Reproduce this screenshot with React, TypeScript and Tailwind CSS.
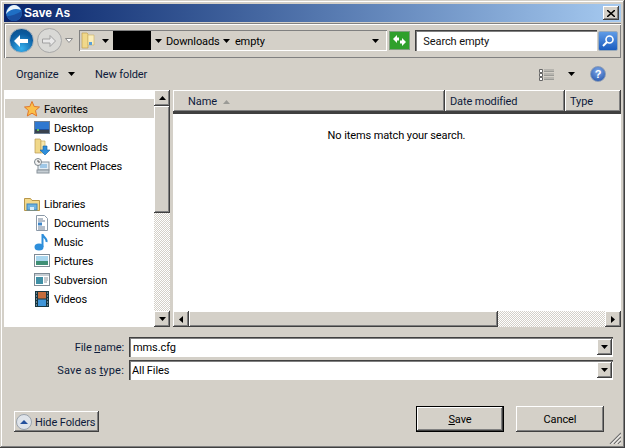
import React from "react";

const raised = "shadow-[inset_-1px_-1px_#404040,inset_1px_1px_#ffffff,inset_-2px_-2px_#808080]";
const hatch = "bg-[repeating-conic-gradient(#ffffff_0_25%,#d4d0c8_0_50%)] bg-[length:2px_2px]";

const Caret = ({ cls = "" }: { cls?: string }) => (
  <svg width="7" height="4" viewBox="0 0 7 4" className={`shrink-0 ${cls}`}><path d="M0 0h7L3.5 4z" fill="#000" /></svg>
);

const Tri = ({ dir }: { dir: "up" | "down" | "left" | "right" }) => {
  const d = { up: "M0 4h7L3.5 0z", down: "M0 0h7L3.5 4z", left: "M4 0v7L0 3.5z", right: "M0 0v7L4 3.5z" }[dir];
  const s = dir === "up" || dir === "down" ? [7, 4] : [4, 7];
  return <svg width={s[0]} height={s[1]} viewBox={`0 0 ${s[0]} ${s[1]}`}><path d={d} fill="#000" /></svg>;
};

const ScrollBtn = ({ dir, cls }: { dir: "up" | "down" | "left" | "right"; cls: string }) => (
  <div className={`bg-[#d4d0c8] flex items-center justify-center shrink-0 ${raised} ${cls}`}><Tri dir={dir} /></div>
);

const Star = () => (
  <svg width="16" height="16" viewBox="0 0 16 16"><path d="M8 .5l2.2 5 5.3.5-4 3.6 1.2 5.400L8 12.200 3.300 15l1.200-5.400-4-3.600 5.300-.5z" fill="#fbc04a" stroke="#e0762a" strokeWidth="1" /></svg>
);
const Desktop = () => (
  <svg width="16" height="16" viewBox="0 0 16 16"><rect x="0.5" y="1.5" width="15" height="12" fill="#1d4f9c" stroke="#6d7f95" /><rect x="1" y="2" width="14" height="7" fill="#2f78d0" /><rect x="1" y="10" width="14" height="3" fill="#39424e" /><rect x="3" y="9" width="2" height="2" fill="#5fc05a" /></svg>
);
const DownloadsIc = () => (
  <svg width="16" height="18" viewBox="0 0 16 18"><path d="M1 1h5l1 1v13H1z" fill="#f0d88a" stroke="#b89a50" strokeWidth=".7" /><path d="M7 3h4v12H7z" fill="#f7e7ad" stroke="#c8ac60" strokeWidth=".7" /><path d="M9 8h4v4h3l-5 5-5-5h3z" fill="#2f8fdc" stroke="#14609f" strokeWidth=".6" /></svg>
);
const Recent = () => (
  <svg width="16" height="16" viewBox="0 0 16 16"><rect x="4" y="4" width="11" height="8" fill="#e3edf4" stroke="#8a949c" /><rect x="6" y="6" width="7" height="4" fill="#9fc7e6" /><circle cx="4" cy="4" r="3.5" fill="#f2f2f2" stroke="#7b858c" /><path d="M4 2v2h2" stroke="#555" fill="none" /><rect x="3" y="12" width="12" height="3" fill="#c6ced4" stroke="#8a949c" /></svg>
);
const Libs = () => (
  <svg width="16" height="16" viewBox="0 0 16 16"><path d="M.5 2.5h6l1.500 2h7.500v10H.5z" fill="#f3d98c" stroke="#b8974a" /><rect x="3" y="8" width="10" height="6" fill="#6fb3e0" stroke="#3f85bd" /><rect x="6" y="11" width="4" height="3" fill="#d8eefb" /></svg>
);
const Doc = () => (
  <svg width="16" height="16" viewBox="0 0 16 16"><path d="M2.5.5h8l3 3v12h-11z" fill="#fff" stroke="#8b99a8" /><path d="M4 4h5M4 6h7M4 12h7M4 14h7" stroke="#6d7f95" /><rect x="4" y="7.5" width="4" height="3" fill="#3f86c7" /></svg>
);
const Music = () => (
  <svg width="16" height="18" viewBox="0 0 16 18"><ellipse cx="5" cy="14" rx="4.500" ry="3.500" fill="#2e8fdb" /><path d="M8.500 14V1c0 3 5 4 4 8" stroke="#2e8fdb" strokeWidth="2" fill="none" /></svg>
);
const Pict = () => (
  <svg width="16" height="13" viewBox="0 0 16 13"><rect x=".5" y=".5" width="15" height="12" fill="#fff" stroke="#7f8b95" /><rect x="2" y="2" width="12" height="5" fill="#a9d6ee" /><rect x="2" y="7" width="12" height="4" fill="#3f8f75" /></svg>
);
const Subv = () => (
  <svg width="16" height="13" viewBox="0 0 16 13"><rect x=".5" y=".5" width="15" height="12" fill="#fff" stroke="#7f8b95" /><rect x="1" y="1" width="14" height="2" fill="#c6ced4" /><rect x="2" y="4" width="7" height="7" fill="#3f8fa5" /><path d="M10 5h4M10 7h4M10 9h3" stroke="#8a949c" /></svg>
);
const Video = () => (
  <svg width="14" height="16" viewBox="0 0 14 16" className="ml-[1px]"><rect width="14" height="16" fill="#17353f" /><rect x="3" y="1" width="8" height="6.500" fill="#c46c3c" /><rect x="3" y="8.500" width="8" height="6.500" fill="#3f95d8" /><path d="M1 2h1M1 5h1M1 8h1M1 11h1M1 14h1M12 2h1M12 5h1M12 8h1M12 11h1M12 14h1" stroke="#bcd" /></svg>
);

const NavRow = ({ top, icon, label, highlight }: { top?: boolean; icon: React.ReactNode; label: string; highlight?: boolean }) => (
  <div className={`h-[19px] flex items-center shrink-0 ${highlight ? "bg-[#d4d0c8]" : ""} ${top ? "pl-[19px]" : "pl-[29px]"}`}>
    <span className="w-[20px] h-[19px] flex items-center shrink-0">{icon}</span>
    <span className="text-[#000] leading-none pt-[1px]">{label}</span>
  </div>
);

export default function App() {
  return (
    <div className="w-[625px] h-[448px] overflow-hidden bg-[#d4d0c8] flex flex-col p-[4px] text-[11px] tracking-[-0.1px] text-black shadow-[inset_-1px_-1px_#404040,inset_1px_1px_#d4d0c8,inset_-2px_-2px_#808080,inset_2px_2px_#ffffff] font-['Roboto','Noto_Sans',sans-serif]">
      {/* Title bar */}
      <div className="h-[18px] shrink-0 flex items-center bg-gradient-to-r from-[#0a246a] to-[#a6caf0]">
        <svg width="16" height="16" viewBox="0 0 16 16" className="ml-[2px]">
          <circle cx="8" cy="8" r="8" fill="#1f6fc4" />
          <path d="M0 9c4-5 10-6 15-4-1-3-4-5-7-5C4 0 1 4 0 9z" fill="#eaf4fb" />
          <path d="M1 11c4 0 10-2 15-5v2c-1 5-4 8-8 8-3 0-6-2-7-5z" fill="#1a4fa0" />
        </svg>
        <span className="ml-[2px] text-white font-bold text-[12px] tracking-normal leading-none font-['Liberation_Sans',sans-serif]">Save As</span>
        <div className={`ml-auto mr-[2px] w-[16px] h-[14px] bg-[#d4d0c8] flex items-center justify-center ${raised}`}>
          <svg width="8" height="7" viewBox="0 0 8 7"><path d="M0 0l8 7M8 0L0 7" stroke="#000" strokeWidth="1.500" /></svg>
        </div>
      </div>

      {/* Nav band */}
      <div className="h-[35px] mt-[1px] shrink-0 flex items-center pl-[5px] pr-[3px] shadow-[inset_0_1px_#808080,inset_1px_0_#808080,inset_0_2px_#ffffff,inset_2px_0_#ffffff,inset_0_-1px_#808080,inset_-1px_0_#808080]">
        <div className="w-[25px] h-[25px] rounded-full bg-[radial-gradient(circle_at_50%_85%,#35b0ee,#0a5a9e_65%,#0d4f88)] border border-[#a9b2bb] flex items-center justify-center">
          <svg width="14" height="12" viewBox="0 0 14 12"><path d="M6 0L0 6l6 6V8h8V4H6z" fill="#fff" /></svg>
        </div>
        <div className="ml-[3px] w-[25px] h-[25px] rounded-full bg-[#d9d9d6] border border-[#a8a8a8] flex items-center justify-center">
          <svg width="14" height="12" viewBox="0 0 14 12"><path d="M8 .5L13.500 6 8 11.500V8H.5V4H8z" fill="#e8e8e8" stroke="#a0a0a0" /></svg>
        </div>
        <svg width="8" height="5" viewBox="0 0 8 5" className="ml-[3px]"><path d="M.5.5h7L4 4.500z" fill="#fff" stroke="#8a8a8a" /></svg>
        <div className="ml-[6px] w-[309px] h-[21px] flex items-center shadow-[inset_1px_1px_#808080,inset_-1px_-1px_#ffffff]">
          <svg width="14" height="17" viewBox="0 0 14 17" className="ml-[2px]"><path d="M1 1h5l1 1v14H1z" fill="#f0d88a" stroke="#c0a050" strokeWidth=".7" /><path d="M7 3h6v10H7z" fill="#fbeebb" stroke="#d0b870" strokeWidth=".7" /><rect x="8" y="10" width="3" height="3" fill="#5aa0d8" /></svg>
          <Caret cls="ml-[7px]" />
          <div className="ml-[4px] w-[38px] h-[19px] bg-black shrink-0" />
          <Caret cls="ml-[4px]" />
          <span className="ml-[4px] leading-none w-[53px] pt-[1px]">Downloads</span>
          <Caret cls="ml-[4px]" />
          <span className="ml-[5px] leading-none pt-[1px]">empty</span>
          <Caret cls="ml-auto mr-[8px]" />
        </div>
        <div className="ml-[2px] w-[21px] h-[19px] bg-[#2fa02c] border border-[#7f9f7f] flex items-center justify-center">
          <svg width="15" height="13" viewBox="0 0 15 13"><path d="M1 5l4-4v2.500h2v3H5V9zM14 8l-4 4V9.500H8v-3h2V4z" fill="#fff" /></svg>
        </div>
        <div className="ml-[5px] w-[182px] h-[21px] bg-white flex items-center pl-[8px] pt-[1px] shadow-[inset_1px_1px_#404040,inset_2px_2px_#808080,inset_-1px_-1px_#ffffff]">
          <span className="leading-none text-[#111]">Search empty</span>
        </div>
        <div className="ml-[1px] w-[20px] h-[20px] rounded-[2px] bg-gradient-to-b from-[#5f9be6] to-[#1a5cc0] border border-[#9ab] flex items-center justify-center">
          <svg width="14" height="14" viewBox="0 0 14 14"><circle cx="8.500" cy="5.500" r="3.500" fill="none" stroke="#fff" strokeWidth="1.600" /><path d="M6 8l-4 4" stroke="#fff" strokeWidth="2" /></svg>
        </div>
      </div>

      {/* Toolbar */}
      <div className="h-[32px] shrink-0 flex items-center pl-[12px] pr-[15px]">
        <span className="leading-none text-[#0d1a3a] w-[45px]">Organize</span>
        <Caret cls="ml-[7px]" />
        <span className="ml-[20px] leading-none text-[#0d1a3a]">New folder</span>
        <svg width="17" height="13" viewBox="0 0 17 13" className="ml-auto"><path d="M1.500 1.500h3v3h-3zM1.500 5.500h3v3h-3zM1.500 9.500h3v3h-3z" fill="#fff" stroke="#666" /><path d="M6 2h10M6 3.500h10M6 6h10M6 7.500h10M6 10h10M6 11.500h10" stroke="#9a9a96" /></svg>
        <Caret cls="ml-[13px]" />
        <div className="ml-[15px] w-[16px] h-[16px] rounded-full bg-[radial-gradient(circle_at_50%_30%,#7fa9e8,#1f4fa8)] border border-[#8a9bb5] flex items-center justify-center text-white font-bold text-[11px] leading-none font-['Liberation_Sans',sans-serif]">?</div>
      </div>

      {/* Main */}
      <div className="h-[237px] shrink-0 flex">
        <div className="w-[150px] shrink-0 bg-white flex flex-col pt-[9px] pl-[1px]">
          <NavRow top highlight icon={<Star />} label="Favorites" />
          <NavRow icon={<Desktop />} label="Desktop" />
          <NavRow icon={<DownloadsIc />} label="Downloads" />
          <NavRow icon={<Recent />} label="Recent Places" />
          <div className="h-[19px] shrink-0" />
          <NavRow top icon={<Libs />} label="Libraries" />
          <NavRow icon={<Doc />} label="Documents" />
          <NavRow icon={<Music />} label="Music" />
          <NavRow icon={<Pict />} label="Pictures" />
          <NavRow icon={<Subv />} label="Subversion" />
          <NavRow icon={<Video />} label="Videos" />
        </div>
        <div className="w-[16px] shrink-0 flex flex-col">
          <ScrollBtn dir="up" cls="h-[16px]" />
          <div className={`h-[107px] shrink-0 bg-[#d4d0c8] ${raised}`} />
          <div className={`flex-1 ${hatch}`} />
          <ScrollBtn dir="down" cls="h-[16px]" />
        </div>
        <div className="w-[3px] shrink-0" />
        <div className="flex-1 min-w-0 flex flex-col bg-white">
          <div className="h-[24px] shrink-0 flex bg-[#d4d0c8] border-b-2 border-[#404040]">
            <div className={`w-[272px] h-[22px] flex items-center pl-[15px] pt-[1px] text-[#0d1a3a] ${raised}`}>
              <span className="leading-none">Name</span>
              <svg width="7" height="4" viewBox="0 0 7 4" className="ml-[6px]"><path d="M0 4h7L3.500 0z" fill="#9a9a96" /></svg>
            </div>
            <div className={`w-[120px] h-[22px] flex items-center pl-[5px] pt-[1px] text-[#0d1a3a] ${raised}`}><span className="leading-none">Date modified</span></div>
            <div className={`flex-1 h-[22px] flex items-center pl-[5px] pt-[1px] text-[#0d1a3a] ${raised}`}><span className="leading-none">Type</span></div>
          </div>
          <div className="flex-1 flex justify-center pt-[16px] pr-[1px]">
            <span className="leading-none h-[12px]">No items match your search.</span>
          </div>
          <div className="h-[16px] shrink-0 flex">
            <ScrollBtn dir="left" cls="w-[16px]" />
            <div className={`w-[309px] shrink-0 bg-[#d4d0c8] ${raised}`} />
            <div className={`flex-1 ${hatch}`} />
            <ScrollBtn dir="right" cls="w-[16px]" />
          </div>
        </div>
      </div>

      {/* Form */}
      <div className="flex-1 min-h-0 flex flex-col pt-[10px] pr-[8px]">
        <div className="flex items-center h-[20px]">
          <span className="w-[120px] text-right leading-none text-[#0d1a3a] pt-[1px]">File <u>n</u>ame:</span>
          <div className="ml-[5px] flex-1 h-[20px] bg-white flex items-center pl-[4px] shadow-[inset_1px_1px_#404040,inset_2px_2px_#808080]">
            <span className="leading-none pt-[1px]">mms.cfg</span>
            <ScrollBtn dir="down" cls="ml-auto w-[15px] h-[16px] mr-[1px]" />
          </div>
        </div>
        <div className="flex items-center h-[20px] mt-[3px]">
          <span className="w-[120px] text-right leading-none tracking-[0.2px] text-[#0d1a3a] pt-[1px]">Save as <u>t</u>ype:</span>
          <div className="ml-[5px] flex-1 h-[20px] bg-white flex items-center pl-[3px] shadow-[inset_1px_1px_#404040,inset_2px_2px_#808080]">
            <span className="leading-none pt-[1px]">All Files</span>
            <ScrollBtn dir="down" cls="ml-auto w-[15px] h-[16px] mr-[1px]" />
          </div>
        </div>
        <div className="flex items-end mt-[26px] relative">
          <div className={`ml-[10px] w-[85px] h-[21px] flex items-center pl-[2px] ${raised}`}>
            <svg width="16" height="16" viewBox="0 0 16 16" className="shrink-0"><circle cx="8" cy="8" r="7.500" fill="#dfe4ea" stroke="#9aa3ad" /><path d="M4 10l4-4 4 4z" fill="#24509c" /></svg>
            <span className="ml-[3px] leading-none text-[#0d1a3a] whitespace-nowrap pt-[1px]">Hide Folders</span>
          </div>
          <div className="ml-[317px] w-[88px] h-[26px] flex items-center justify-center border border-black shadow-[inset_-1px_-1px_#404040,inset_1px_1px_#ffffff,inset_-2px_-2px_#808080]">
            <span className="leading-none"><u>S</u>ave</span>
          </div>
          <div className={`ml-[12px] w-[88px] h-[26px] flex items-center justify-center ${raised}`}>
            <span className="leading-none">Cancel</span>
          </div>
          <svg width="12" height="12" viewBox="0 0 12 12" className="absolute right-[-8px] bottom-[-12px]"><path d="M12 1L1 12M12 5l-7 7M12 9l-3 3" stroke="#707070" strokeWidth="1.200" /><path d="M12 2.500L2.500 12M12 6.500L6.500 12M12 10.500L10.500 12" stroke="#ffffff" /></svg>
        </div>
      </div>
    </div>
  );
}
